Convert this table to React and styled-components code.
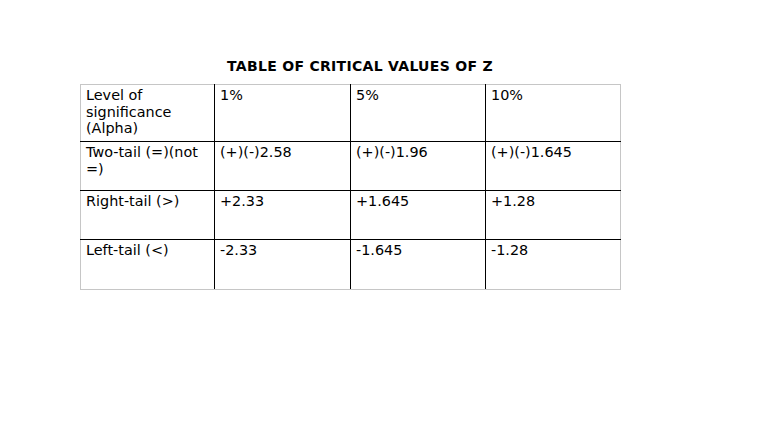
import React from 'react';
import styled, { createGlobalStyle } from 'styled-components';

const GlobalStyle = createGlobalStyle`
  html, body {
    margin: 0;
    padding: 0;
    background: #ffffff;
    font-family: "DejaVu Sans", sans-serif;
    color: #000;
  }
`;

const Page = styled.div`
  width: 768px;
  height: 433px;
  padding: 58px 0 0 80px;
  box-sizing: border-box;
`;

const Title = styled.h1`
  width: 540px;
  margin: 0 0 9px;
  padding-left: 20px;
  box-sizing: border-box;
  text-align: center;
  font-size: 14px;
  font-weight: bold;
  line-height: 17px;
  letter-spacing: 0.3px;
`;

const Table = styled.table`
  border-collapse: collapse;
  table-layout: fixed;
  width: 541px;
`;

const Cell = styled.td`
  width: ${p => p.$width}px;
  height: ${p => p.$height}px;
  padding: 2px 5px 0;
  box-sizing: border-box;
  vertical-align: top;
  font-size: 14.4px;
  line-height: 16.5px;
  border: 1px solid #000;

  &:first-child { border-left-color: #c6c6c6; }
  &:last-child { border-right-color: #c6c6c6; }
  tr:first-child > & { border-top-color: #c6c6c6; }
  tr:last-child > & { border-bottom-color: #c6c6c6; }
`;

const widths = [134, 136, 135, 135];

const rows = [
  { h: 57, cells: ['Level of significance (Alpha)', '1%', '5%', '10%'] },
  { h: 49, cells: ['Two-tail (=)(not =)', '(+)(-)2.58', '(+)(-)1.96', '(+)(-)1.645'] },
  { h: 49, cells: ['Right-tail (>)', '+2.33', '+1.645', '+1.28'] },
  { h: 50, cells: ['Left-tail (<)', '-2.33', '-1.645', '-1.28'] },
];

const App = () => (
  <>
    <GlobalStyle />
    <Page>
      <Title>TABLE OF CRITICAL VALUES OF Z</Title>
      <Table>
        <tbody>
          {rows.map((row, i) => (
            <tr key={i}>
              {row.cells.map((c, j) => (
                <Cell key={j} $width={widths[j]} $height={row.h}>{c}</Cell>
              ))}
            </tr>
          ))}
        </tbody>
      </Table>
    </Page>
  </>
);

export default App;
